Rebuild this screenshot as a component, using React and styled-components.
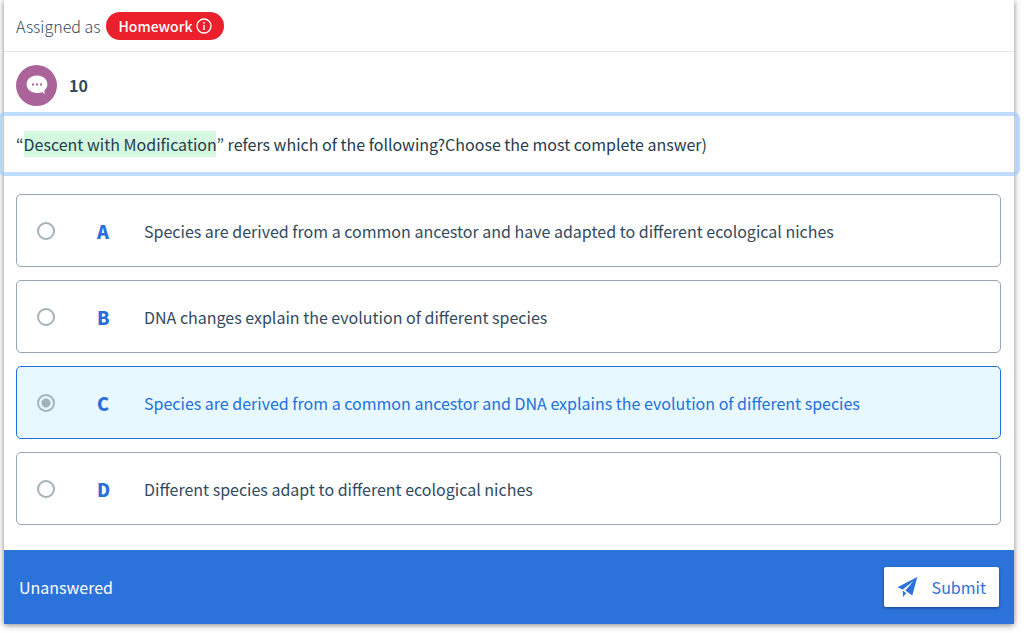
import React, { useState } from "react";
import styled, { createGlobalStyle } from "styled-components";

const GlobalStyle = createGlobalStyle`
  * {
    box-sizing: border-box;
  }
  body {
    margin: 0;
    background: #ffffff;
    color: #324a5e;
    font-family: "Noto Sans CJK KR", "Noto Sans", sans-serif;
    font-size: 16px;
    line-height: 24px;
  }
  button, input {
    font: inherit;
  }
`;

const Card = styled.main`
  margin: 0 10px 9px 4px;
  background: #ffffff;
  box-shadow: 0 1px 6px rgba(0, 0, 0, 0.5);
`;

const Header = styled.header`
  display: flex;
  align-items: center;
  gap: 6px;
  height: 52px;
  padding: 0 12px;
  border-bottom: 1px solid #e6e6e6;
`;

const AssignedLabel = styled.span`
  font-weight: 300;
`;

const Badge = styled.button`
  display: flex;
  align-items: center;
  gap: 4px;
  height: 28px;
  padding: 0 12px;
  border: 0;
  border-radius: 14px;
  background: #ec1f2d;
  color: #ffffff;
  font-size: 14px;
  font-weight: 500;
`;

const QuestionNumber = styled.div`
  display: flex;
  align-items: center;
  gap: 12px;
  height: 66px;
  padding: 0 12px;
  font-weight: 700;
`;

const Avatar = styled.span`
  display: flex;
  align-items: center;
  justify-content: center;
  width: 41px;
  height: 41px;
  border-radius: 50%;
  background: #aa6499;
`;

const Question = styled.section`
  padding: 14px 12px;
  color: #253c4d;
  outline: 4px solid rgba(153, 202, 255, 0.65);
  outline-offset: 2px;
  border-radius: 1px;

  p {
    margin: 0;
  }
`;

const Highlight = styled.mark`
  padding: 1px 0;
  background: #d4f8e0;
  color: inherit;
`;

const Options = styled.div`
  display: flex;
  flex-direction: column;
  gap: 13px;
  padding: 24px 13px 25px 12px;
`;

const Option = styled.label`
  display: flex;
  align-items: center;
  height: 73px;
  padding: 0 20px;
  border: 1px solid ${(props) => (props.$selected ? "#2170dc" : "#96a6b4")};
  border-radius: 5px;
  background: ${(props) => (props.$selected ? "#e7f9ff" : "#ffffff")};
  color: ${(props) => (props.$selected ? "#2170dc" : "#324a5e")};
`;

const Radio = styled.input`
  flex: none;
  appearance: none;
  width: 18px;
  height: 18px;
  margin: 0;
  border: 2px solid #a3b1bb;
  border-radius: 50%;

  &:checked {
    background: radial-gradient(circle, #a3b1bb 4px, transparent 5px);
  }
`;

const Letter = styled.span`
  flex: none;
  width: 47px;
  margin-left: 42px;
  color: #2770dc;
  font-size: 18px;
  font-weight: 900;
`;

const Footer = styled.footer`
  display: flex;
  align-items: center;
  justify-content: space-between;
  height: 74px;
  padding: 0 15px;
  background: #2b72da;
  color: #ffffff;
`;

const SubmitButton = styled.button`
  display: flex;
  align-items: center;
  gap: 14px;
  height: 40px;
  padding: 0 13px;
  border: 0;
  border-radius: 2px;
  background: #ffffff;
  color: #2b72da;
  box-shadow: 0 1px 3px rgba(0, 0, 0, 0.4);
`;

const options = [
  { id: "A", text: "Species are derived from a common ancestor and have adapted to different ecological niches" },
  { id: "B", text: "DNA changes explain the evolution of different species" },
  { id: "C", text: "Species are derived from a common ancestor and DNA explains the evolution of different species" },
  { id: "D", text: "Different species adapt to different ecological niches" },
];

const InfoIcon = () => (
  <svg width="16" height="16" viewBox="0 0 16 16" fill="none" aria-hidden="true">
    <circle cx="8" cy="8" r="7" stroke="currentColor" strokeWidth="1.3" />
    <circle cx="8" cy="4.8" r="0.9" fill="currentColor" />
    <path d="M8 7V11.8" stroke="currentColor" strokeWidth="1.4" />
    <path d="M7 7.300H8M7 11.500H9" stroke="currentColor" strokeWidth="0.6" />
  </svg>
);

const ChatIcon = () => (
  <svg width="22" height="20" viewBox="0 0 22 20" aria-hidden="true">
    <path
      d="M11 .6C5 .6.6 4.3.6 9.3S5 18 11 18c2 0 4-.3 5.600-1 .6.900 1.300 1.900 1.900 2.600 .1-1.800-.1-3.400-.1-4.300 1.900-1.500 3-3.500 3-5.700C21.400 4.300 17 .6 11 .6Z"
      fill="#ffffff"
    />
    <path d="M6 8.500h2v2h-2ZM10 8.500h2v2h-2ZM14 8.500h2v2h-2Z" fill="#aa6499" />
  </svg>
);

const SendIcon = () => (
  <svg width="21" height="20" viewBox="0 0 21 20" fill="currentColor" aria-hidden="true">
    <path d="M20.300 0 .5 10.200 5.700 12.400 16.500 4 8.400 13.400 15.300 18.500Z" />
    <path d="M5.800 13.400 6 20 9.200 16.200Z" />
  </svg>
);

export default function App() {
  const [selected, setSelected] = useState("C");

  return (
    <>
      <GlobalStyle />
      <Card>
        <Header>
          <AssignedLabel>Assigned as</AssignedLabel>
          <Badge type="button">
            Homework
            <InfoIcon />
          </Badge>
        </Header>

        <QuestionNumber>
          <Avatar>
            <ChatIcon />
          </Avatar>
          <span>10</span>
        </QuestionNumber>

        <Question>
          <p>
            “<Highlight>Descent with Modification</Highlight>” refers which of the following?Choose the most complete answer)
          </p>
        </Question>

        <Options role="radiogroup" aria-label="Answers">
          {options.map((option) => (
            <Option key={option.id} $selected={selected === option.id}>
              <Radio
                type="radio"
                name="answer"
                value={option.id}
                checked={selected === option.id}
                onChange={() => setSelected(option.id)}
              />
              <Letter>{option.id}</Letter>
              <span>{option.text}</span>
            </Option>
          ))}
        </Options>

        <Footer>
          <span>Unanswered</span>
          <SubmitButton type="button">
            <SendIcon />
            Submit
          </SubmitButton>
        </Footer>
      </Card>
    </>
  );
}
